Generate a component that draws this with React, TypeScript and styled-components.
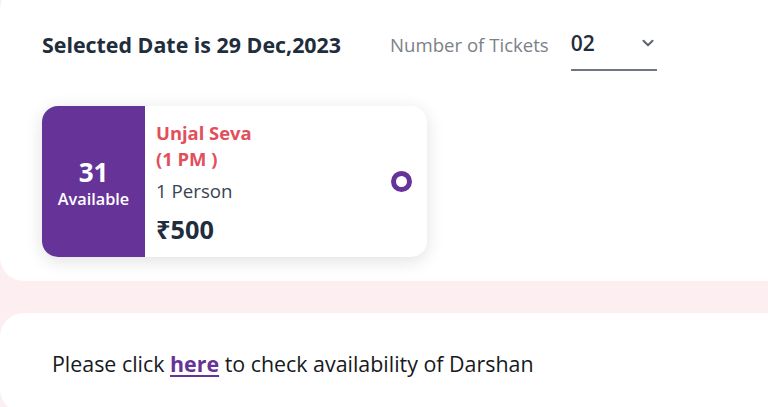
import React from "react";
import styled, { createGlobalStyle } from "styled-components";

const Global = createGlobalStyle`
  html, body { margin: 0; padding: 0; }
  body {
    background: #fdeff1;
    font-family: "Open Sans", "Noto Sans", sans-serif;
    overflow: hidden;
  }
`;

const Page = styled.div`
  width: 768px;
  height: 407px;
  overflow: hidden;
  display: flex;
  flex-direction: column;
  gap: 32px;
`;

const Panel = styled.section<{ $top?: number }>`
  background: #ffffff;
  border-radius: 24px;
  margin-right: -40px;
  margin-top: ${(p) => p.$top ?? 0}px;
`;

const TopPanel = styled(Panel)`
  padding: 31px 0 24px 42px;
  display: flex;
  flex-direction: column;
  gap: 35px;
`;

const Header = styled.div`
  display: flex;
  align-items: center;
  height: 54px;
`;

const Title = styled.h2`
  margin: 0;
  font-size: 21.4px;
  font-weight: 700;
  color: #1f2d3d;
  white-space: nowrap;
`;

const Tickets = styled.div`
  display: flex;
  align-items: center;
  margin-left: 49px;
  height: 100%;
`;

const Label = styled.span`
  font-size: 18.6px;
  color: #7c8188;
  white-space: nowrap;
`;

const Select = styled.div`
  box-sizing: border-box;
  margin-left: 22px;
  width: 86px;
  height: 54px;
  border-bottom: 2px solid #6e7781;
  display: flex;
  align-items: center;
  justify-content: space-between;
  padding-right: 0;
`;

const SelectValue = styled.span`
  font-size: 21px;
  font-weight: 600;
  color: #1f2d3d;
`;

const Card = styled.div`
  width: 385px;
  height: 151px;
  display: flex;
  border-radius: 16px;
  overflow: hidden;
  background: #fff;
  box-shadow: 0 4px 18px rgba(0, 0, 0, 0.12);
`;

const Availability = styled.div`
  width: 103px;
  background: #663399;
  color: #fff;
  display: flex;
  flex-direction: column;
  align-items: center;
  justify-content: center;
  padding-top: 3px;
  box-sizing: border-box;
`;

const Count = styled.div`
  font-size: 26px;
  font-weight: 700;
  line-height: 32px;
`;

const AvailLabel = styled.div`
  font-size: 16.3px;
  font-weight: 600;
  line-height: 22px;
`;

const Details = styled.div`
  flex: 1;
  display: flex;
  align-items: center;
  padding: 0 15px 0 11px;
`;

const Info = styled.div`
  flex: 1;
  display: flex;
  flex-direction: column;
  padding-top: 1px;
`;

const Seva = styled.div`
  font-size: 18.4px;
  font-weight: 700;
  color: #e24e5c;
  line-height: 26px;
`;

const Person = styled.div`
  font-size: 18.7px;
  color: #3a4450;
  line-height: 26px;
  margin-top: 6px;
`;

const Price = styled.div`
  font-size: 25.3px;
  font-weight: 700;
  color: #1f2d3d;
  line-height: 32px;
  margin-top: 9px;
`;

const Radio = styled.span`
  width: 21px;
  height: 21px;
  box-sizing: border-box;
  border-radius: 50%;
  border: 5px solid #663399;
  background: #fff;
`;

const BottomPanel = styled(Panel)`
  height: 100px;
  padding-left: 52px;
  display: flex;
  align-items: center;
  flex-shrink: 0;
`;

const Note = styled.p`
  margin: 0;
  font-size: 21.4px;
  color: #16191d;
  white-space: nowrap;
`;

const Link = styled.a`
  color: #663399;
  font-weight: 700;
  text-decoration: underline;
  text-underline-offset: 3px;
`;

const Chevron = () => (
  <svg width="18" height="18" viewBox="0 0 24 24" fill="none" stroke="#5f6872" strokeWidth="2.8" strokeLinecap="round" strokeLinejoin="round">
    <path d="M6 9l6 6 6-6" />
  </svg>
);

export default function App() {
  return (
    <>
      <Global />
      <Page>
        <TopPanel $top={-14}>
          <Header>
            <Title>Selected Date is 29 Dec,2023</Title>
            <Tickets>
              <Label>Number of Tickets</Label>
              <Select>
                <SelectValue>02</SelectValue>
                <Chevron />
              </Select>
            </Tickets>
          </Header>
          <Card>
            <Availability>
              <Count>31</Count>
              <AvailLabel>Available</AvailLabel>
            </Availability>
            <Details>
              <Info>
                <Seva>Unjal Seva</Seva>
                <Seva>(1 PM )</Seva>
                <Person>1 Person</Person>
                <Price>₹500</Price>
              </Info>
              <Radio />
            </Details>
          </Card>
        </TopPanel>
        <BottomPanel>
          <Note>
            Please click <Link href="#">here</Link> to check availability of Darshan
          </Note>
        </BottomPanel>
      </Page>
    </>
  );
}
